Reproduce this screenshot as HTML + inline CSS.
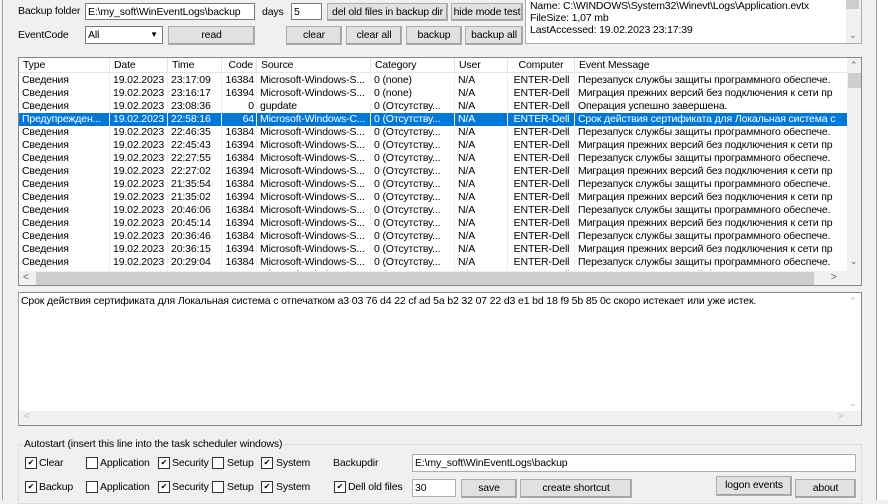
<!DOCTYPE html>
<html><head><meta charset="utf-8">
<style>
*{box-sizing:border-box;margin:0;padding:0}
body{width:888px;height:500px;overflow:hidden;background:#f0f0f0;font-family:"Liberation Sans",Arial,sans-serif;font-size:10.5px;letter-spacing:-0.15px;color:#000;position:relative}
.a{position:absolute;white-space:nowrap}
.in{position:absolute;background:#fff;border:1px solid #7a7a7a;padding:1px 2px;line-height:14px;white-space:nowrap;overflow:hidden}
.btn{position:absolute;background:#e1e1e1;border:1px solid #adadad;box-shadow:inset -1px -1px 0 #a0a0a0;text-align:center;line-height:16px;white-space:nowrap;overflow:hidden}
.lv{position:absolute;left:18px;top:57px;width:844px;height:229px;background:#fff;border:1px solid #828790;overflow:hidden}
.hdr{position:absolute;left:0;top:0;height:15px;width:830px;background:#fff;border-bottom:1px solid #e5e5e5}
.c{position:absolute;top:0;height:13px;line-height:13px;overflow:hidden;white-space:nowrap;padding-left:3px}
.hc{position:absolute;top:0;height:15px;line-height:15px;border-right:1px solid #e5e5e5;padding-left:4px;white-space:nowrap}
.row{position:absolute;left:0;width:828px;height:13px}
.sel{background:#0078d7;color:#fff}
.vg{position:absolute;top:15px;width:1px;height:200px;background:#f0f0f0}
.cb{position:absolute;width:12px;height:12px;border:1px solid #333;background:#fff;font-size:8px;line-height:10px;text-align:center;letter-spacing:0}
</style></head><body>
<div class="a" style="left:2px;top:0;width:1px;height:500px;background:#a0a0a0"></div>
<div class="a" style="left:876px;top:0;width:1px;height:500px;background:#a0a0a0"></div>
<div class="a" style="left:877px;top:0;width:11px;height:500px;background:#fff"></div>

<div class="a" style="left:18px;top:5px">Backup folder</div>
<div class="in" style="left:85px;top:3px;width:170px;height:17px">E:\my_soft\WinEventLogs\backup</div>
<div class="a" style="left:262px;top:6px">days</div>
<div class="in" style="left:291px;top:3px;width:31px;height:17px">5</div>
<div class="btn" style="left:327px;top:3px;width:121px;height:18px">del old files in backup dir</div>
<div class="btn" style="left:451px;top:3px;width:72px;height:18px">hide mode test</div>

<div class="in" style="left:525px;top:-16px;width:337px;height:60px;border-color:#adadad;line-height:12px;padding:3px 4px">NumberOfRecords: 979<br>Name: C:\WINDOWS\System32\Winevt\Logs\Application.evtx<br>FileSize: 1,07 mb<br>LastAccessed: 19.02.2023 23:17:39</div>
<div class="a" style="left:846px;top:0;width:15px;height:43px;background:#f0f0f0"></div>
<div class="a" style="left:846px;top:0;width:13px;height:9px;background:#cdcdcd"></div>
<div class="a" style="left:849px;top:30px;font-size:9px;color:#606060">⌄</div>

<div class="a" style="left:18px;top:29px">EventCode</div>
<div class="in" style="left:85px;top:26px;width:78px;height:18px">All</div>
<div class="a" style="left:147px;top:28px;width:14px;height:14px;font-size:8px;text-align:center;line-height:14px">▼</div>
<div class="btn" style="left:168px;top:26px;width:87px;height:19px">read</div>
<div class="btn" style="left:286px;top:26px;width:56px;height:19px">clear</div>
<div class="btn" style="left:346px;top:26px;width:56px;height:19px">clear all</div>
<div class="btn" style="left:406px;top:26px;width:56px;height:19px">backup</div>
<div class="btn" style="left:465px;top:26px;width:58px;height:19px">backup all</div>

<div class="lv">
<div class="hdr">
<div class="hc" style="left:0;width:91px">Type</div>
<div class="hc" style="left:91px;width:58px">Date</div>
<div class="hc" style="left:149px;width:54px">Time</div>
<div class="hc" style="left:203px;width:35px;text-align:right;padding-right:3px">Code</div>
<div class="hc" style="left:238px;width:114px">Source</div>
<div class="hc" style="left:352px;width:84px">Category</div>
<div class="hc" style="left:436px;width:53px">User</div>
<div class="hc" style="left:489px;width:67px;text-align:center;padding:0">Computer</div>
<div class="hc" style="left:556px;width:274px;border:0">Event Message</div>
</div>
<div id="rows"></div>
<div class="a" style="left:828px;top:0;width:15px;height:213px;background:#f0f0f0"></div>
<div class="a" style="left:831px;top:2px;font-size:9px;color:#606060">⌃</div>
<div class="a" style="left:829px;top:15px;width:13px;height:15px;background:#cdcdcd"></div>
<div class="a" style="left:831px;top:198px;font-size:9px;color:#606060">⌄</div>
<div class="a" style="left:0;top:213px;width:843px;height:15px;background:#f0f0f0"></div>
<div class="a" style="left:17px;top:214px;width:778px;height:13px;background:#cdcdcd"></div>
<div class="a" style="left:4px;top:214px;font-size:10px;color:#606060">&lt;</div>
<div class="a" style="left:812px;top:214px;font-size:10px;color:#606060">&gt;</div>
</div>

<div class="a" style="left:18px;top:292px;width:844px;height:134px;background:#fff;border:1px solid #828790;border-left-color:#a0a0a0"></div>
<div class="a" style="left:21px;top:295px">Срок действия сертификата для Локальная система с отпечатком a3 03 76 d4 22 cf ad 5a b2 32 07 22 d3 e1 bd 18 f9 5b 85 0c скоро истекает или уже истек.</div>
<div class="a" style="left:846px;top:293px;width:15px;height:118px;background:#fff"></div>
<div class="a" style="left:849px;top:296px;font-size:9px;color:#bbb">⌃</div>
<div class="a" style="left:849px;top:398px;font-size:9px;color:#bbb">⌄</div>
<div class="a" style="left:19px;top:411px;width:842px;height:14px;background:#f0f0f0"></div>
<div class="a" style="left:24px;top:411px;font-size:10px;color:#bbb">&lt;</div>
<div class="a" style="left:838px;top:411px;font-size:10px;color:#bbb">&gt;</div>

<div class="a" style="left:18px;top:444px;width:844px;height:60px;border:1px solid #dcdcdc"></div>
<div class="a" style="left:23px;top:438px;background:#f0f0f0;padding:0 1px">Autostart (insert this line into the task scheduler windows)</div>

<div class="cb" style="left:25px;top:457px">✔</div><div class="a" style="left:39px;top:457px">Clear</div>
<div class="cb" style="left:86px;top:457px"></div><div class="a" style="left:100px;top:457px">Application</div>
<div class="cb" style="left:158px;top:457px">✔</div><div class="a" style="left:172px;top:457px">Security</div>
<div class="cb" style="left:212px;top:457px"></div><div class="a" style="left:227px;top:457px">Setup</div>
<div class="cb" style="left:261px;top:457px">✔</div><div class="a" style="left:276px;top:457px">System</div>
<div class="a" style="left:333px;top:457px">Backupdir</div>
<div class="in" style="left:412px;top:454px;width:444px;height:18px;border-color:#adadad">E:\my_soft\WinEventLogs\backup</div>

<div class="cb" style="left:25px;top:481px">✔</div><div class="a" style="left:39px;top:481px">Backup</div>
<div class="cb" style="left:86px;top:481px"></div><div class="a" style="left:100px;top:481px">Application</div>
<div class="cb" style="left:158px;top:481px">✔</div><div class="a" style="left:172px;top:481px">Security</div>
<div class="cb" style="left:212px;top:481px"></div><div class="a" style="left:227px;top:481px">Setup</div>
<div class="cb" style="left:261px;top:481px">✔</div><div class="a" style="left:276px;top:481px">System</div>
<div class="cb" style="left:334px;top:481px">✔</div><div class="a" style="left:348px;top:481px">Dell old files</div>
<div class="in" style="left:412px;top:479px;width:44px;height:18px;border-color:#adadad">30</div>
<div class="btn" style="left:461px;top:479px;width:56px;height:19px">save</div>
<div class="btn" style="left:520px;top:479px;width:112px;height:19px">create shortcut</div>
<div class="btn" style="left:716px;top:476px;width:76px;height:20px">logon events</div>
<div class="btn" style="left:795px;top:479px;width:61px;height:19px">about</div>

<script>
var d=[["Сведения","23:17:09","16384","0 (none)","Перезапуск службы защиты программного обеспече."],
["Сведения","23:16:17","16394","0 (none)","Миграция прежних версий без подключения к сети пр"],
["Сведения","23:08:36","0","0 (Отсутству...","Операция успешно завершена."],
["Предупрежден...","22:58:16","64","0 (Отсутству...","Срок действия сертификата для Локальная система с"]];
var t=["22:46:35","22:45:43","22:27:55","22:27:02","21:35:54","21:35:02","20:46:06","20:45:14","20:36:46","20:36:15","20:29:04","20:28:12"];
t.forEach(function(x,i){var a=i%2==0;d.push(["Сведения",x,a?"16384":"16394","0 (Отсутству...",a?"Перезапуск службы защиты программного обеспече.":"Миграция прежних версий без подключения к сети пр"]);});
var h="";
d.forEach(function(r,i){
var src=i==2?"gupdate":(i==3?"Microsoft-Windows-C...":"Microsoft-Windows-S...");
h+='<div class="row'+(i==3?' sel':'')+'" style="top:'+(16+i*13)+'px">'+
'<div class="c" style="left:0;width:91px">'+r[0]+'</div>'+
'<div class="c" style="left:91px;width:58px">19.02.2023</div>'+
'<div class="c" style="left:149px;width:54px">'+r[1]+'</div>'+
'<div class="c" style="left:203px;width:35px;text-align:right;padding-right:3px">'+r[2]+'</div>'+
'<div class="c" style="left:238px;width:114px">'+src+'</div>'+
'<div class="c" style="left:352px;width:84px">'+r[3]+'</div>'+
'<div class="c" style="left:436px;width:53px">N/A</div>'+
'<div class="c" style="left:489px;width:67px;text-align:center;padding:0">ENTER-Dell</div>'+
'<div class="c" style="left:556px;width:272px">'+r[4]+'</div></div>';});
[91,149,203,238,352,436,489,556].forEach(function(x){h+='<div class="vg" style="left:'+(x-1)+'px"></div>';});
document.getElementById("rows").innerHTML=h;
</script>
</body></html>
